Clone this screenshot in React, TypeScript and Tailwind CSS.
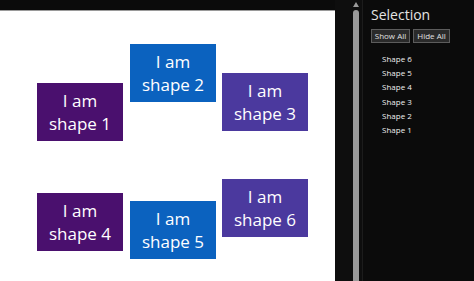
const shapes = [
  { n: 1, x: 37, y: 83, c: "bg-[#4a106e]" },
  { n: 2, x: 130, y: 44, c: "bg-[#0b62bf]" },
  { n: 3, x: 222, y: 73, c: "bg-[#4b399e]" },
  { n: 4, x: 37, y: 193, c: "bg-[#4a106e]" },
  { n: 5, x: 130, y: 201, c: "bg-[#0b62bf]" },
  { n: 6, x: 222, y: 179, c: "bg-[#4b399e]" },
];

export default function App() {
  return (
    <div className="flex h-[281px] w-[474px] overflow-hidden bg-[#0b0b0b] font-['Open_Sans',sans-serif]">
      {/* slide canvas */}
      <div className="flex w-[335px] flex-col">
        <div className="h-[10px] bg-[#0b0b0b]" />
        <div className="h-px bg-[#9a9a9a]" />
        <div className="relative flex-1 bg-white">
          {shapes.map((s) => (
            <div
              key={s.n}
              className={`absolute flex h-[58px] w-[86px] flex-col items-center justify-center text-[17px] leading-[23px] text-white ${s.c}`}
              style={{ left: s.x, top: s.y - 11 }}
            >
              <span>I am</span>
              <span>shape {s.n}</span>
            </div>
          ))}
        </div>
      </div>

      {/* scrollbar */}
      <div className="flex w-[27px] bg-[#0e0e0e] pl-[18px]">
        <div className="flex w-[6px] flex-col items-center">
          <svg width="6" height="5" viewBox="0 0 6 5" className="mt-[2px]">
            <path d="M3 0 L6 5 L0 5 Z" fill="#9a9a9a" />
          </svg>
          <div className="mt-[3px] w-[6px] flex-1 rounded-t-full bg-[#9a9a9a]" />
        </div>
      </div>

      {/* selection pane */}
      <div className="flex-1 border-l border-[#1c1c1c] pl-[8px] pt-[5px]">
        <div className="text-[14px] leading-[20px] text-[#e4e4e4]">Selection</div>
        <div className="mt-[4px] flex gap-[3px]">
          <button className="h-[14px] w-[39px] border border-[#5c5c5c] bg-[#2a2a2a] text-[8px] font-medium leading-[12px] text-[#e0e0e0]">
            Show All
          </button>
          <button className="h-[14px] w-[37px] border border-[#5c5c5c] bg-[#2a2a2a] text-[8px] font-medium leading-[12px] text-[#e0e0e0]">
            Hide All
          </button>
        </div>
        <ul className="mt-[9px] pl-[11px] text-[8px] font-medium leading-[14.2px] text-[#f0f0f0]">
          {[6, 5, 4, 3, 2, 1].map((n) => (
            <li key={n}>Shape {n}</li>
          ))}
        </ul>
      </div>
    </div>
  );
}
